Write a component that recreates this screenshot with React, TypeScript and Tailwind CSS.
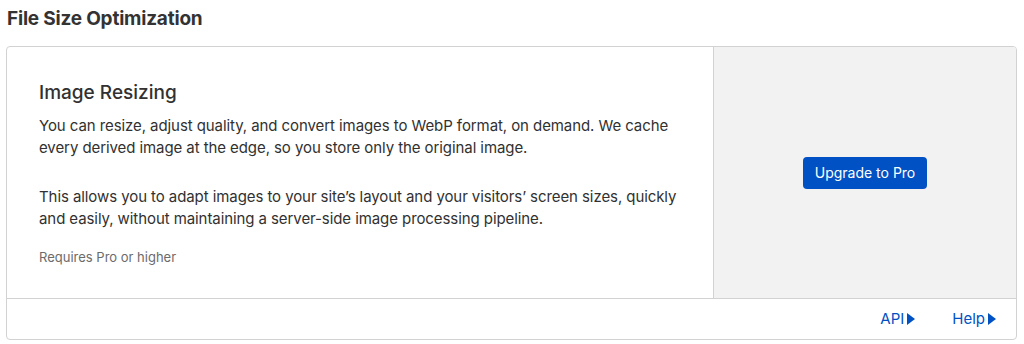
import React from "react";

function Arrow() {
  return (
    <svg width="8" height="12" viewBox="0 0 8 12" className="ml-[3px] inline-block">
      <path d="M0 0 L8 6 L0 12 Z" fill="#0051c3" />
    </svg>
  );
}

export default function App() {
  return (
    <div className="w-[1024px] h-[344px] bg-white px-[6px] pt-[6px] font-['Inter',sans-serif] text-[#313131]">
      <h2 className="ml-px text-[19px] leading-[26px] font-bold tracking-[-0.2px] text-[#333]">File Size Optimization</h2>
      <div className="mt-[14px] w-[1011px] rounded-[4px] border border-[#d2d2d2] overflow-hidden">
        <div className="flex h-[252px] border-b border-[#d2d2d2]">
          <div className="w-[707px] border-r border-[#d2d2d2] pl-[32px] pr-6 flex flex-col justify-center">
            <h3 className="text-[19px] leading-[28px] font-medium text-[#313131]">Image Resizing</h3>
            <p className="mt-[8px] text-[15px] leading-[22px] tracking-[-0.08px]">
              You can resize, adjust quality, and convert images to WebP format, on demand. We cache every derived image at the edge, so you store only the original image.
            </p>
            <p className="mt-[27px] text-[15px] leading-[22px] tracking-[-0.08px]">
              This allows you to adapt images to your site’s layout and your visitors’ screen sizes, quickly and easily, without maintaining a server-side image processing pipeline.
            </p>
            <p className="mt-[17px] text-[13px] leading-[20px] text-[#6b6b6b]">Requires Pro or higher</p>
          </div>
          <div className="flex-1 bg-[#f2f2f2] flex items-center justify-center">
            <button className="h-[32px] px-[12px] rounded-[4px] bg-[#0051c3] text-white text-[14px]">Upgrade to Pro</button>
          </div>
        </div>
        <div className="h-[40px] flex items-center justify-end pr-[20px] gap-[37px] text-[15px] text-[#0051c3]">
          <a className="flex items-center">API<Arrow /></a>
          <a className="flex items-center">Help<Arrow /></a>
        </div>
      </div>
    </div>
  );
}
